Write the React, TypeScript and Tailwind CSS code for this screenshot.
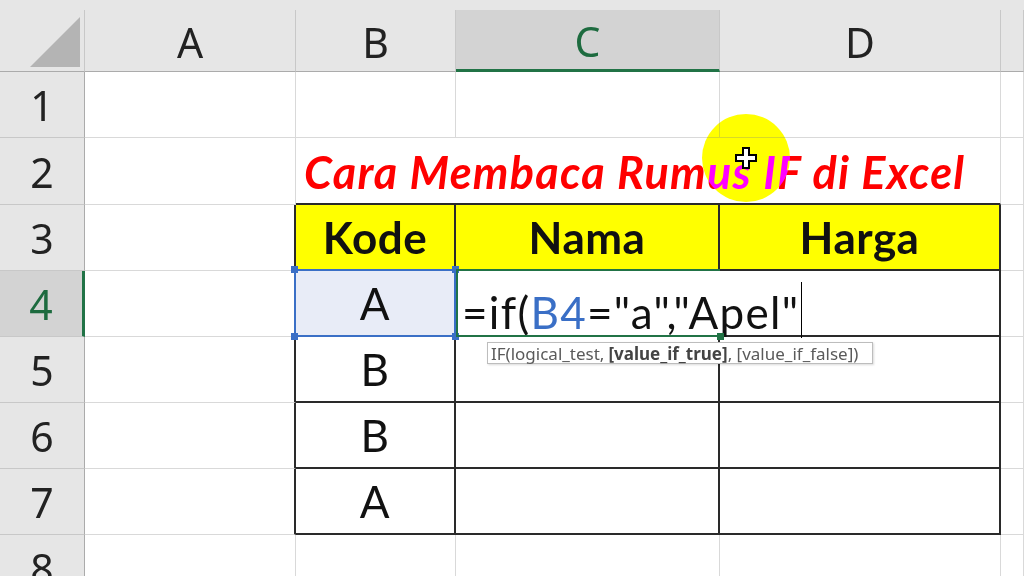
import React from "react";
import clsx from "clsx";

type B = "g" | "k" | "n";

const colHeaders = ["A", "B", "C", "D", ""];

function borderCls(r: B, b: B) {
  return clsx(
    r === "g" && "border-r border-r-[#d9d9d9]",
    r === "k" && "border-r-2 border-r-[#2a2a2a]",
    b === "g" && "border-b border-b-[#d9d9d9]",
    b === "k" && "border-b-2 border-b-[#2a2a2a]"
  );
}

// borders [row][col] for rows 1..8, cols A..E
const borders: [B, B][][] = [
  [["g", "g"], ["g", "g"], ["g", "g"], ["g", "g"], ["g", "g"]],
  [["g", "g"], ["n", "k"], ["n", "k"], ["g", "k"], ["g", "g"]],
  [["k", "g"], ["k", "k"], ["k", "k"], ["k", "k"], ["g", "g"]],
  [["k", "g"], ["k", "k"], ["n", "k"], ["k", "k"], ["g", "g"]],
  [["k", "g"], ["k", "k"], ["k", "k"], ["k", "k"], ["g", "g"]],
  [["k", "g"], ["k", "k"], ["k", "k"], ["k", "k"], ["g", "g"]],
  [["k", "g"], ["k", "k"], ["k", "k"], ["k", "k"], ["g", "g"]],
  [["g", "g"], ["g", "g"], ["g", "g"], ["g", "g"], ["g", "g"]],
];

const cellFont = "font-['Lato',sans-serif] text-[44px] leading-none tracking-[0.5px] text-[#111]";

function CellContent({ r, c }: { r: number; c: number }) {
  if (r === 2 && c === 1) {
    return (
      <span className="relative z-10 whitespace-nowrap pl-[8px] pt-[4px] font-['Lato',sans-serif] text-[45px] font-bold italic leading-none tracking-[1.25px] text-[#ff0000]">
        Cara Membaca Rumus IF di Excel
      </span>
    );
  }
  if (r === 3 && c >= 1 && c <= 3) {
    const t = ["Kode", "Nama", "Harga"][c - 1];
    return <span className={clsx(cellFont, "font-bold")}>{t}</span>;
  }
  if (c === 1 && r >= 4 && r <= 7) {
    const t = ["A", "B", "B", "A"][r - 4];
    return <span className={cellFont}>{t}</span>;
  }
  if (r === 4 && c === 2) {
    return (
      <span className={clsx(cellFont, "relative z-10 whitespace-nowrap pl-[6px] tracking-[1.3px]")}>
        =if(<span className="text-[#3a6fc6]">B4</span>="a","Apel"
        <span className="ml-[2px] inline-block h-[56px] w-px translate-y-[9px] bg-black align-baseline" />
      </span>
    );
  }
  return null;
}

function Cursor() {
  return (
    <svg width="24" height="24" viewBox="0 0 24 24" className="absolute left-[734px] top-[146px] z-30">
      <path
        d="M9 2 H15 V9 H22 V15 H15 V22 H9 V15 H2 V9 H9 Z"
        fill="#ffffff"
        stroke="#000000"
        strokeWidth="2"
        strokeLinejoin="miter"
      />
    </svg>
  );
}

export default function App() {
  return (
    <div className="relative h-[576px] w-[1024px] overflow-hidden bg-white">
      <div className="h-[10px] bg-[#e6e6e6]" />
      <div className="grid grid-cols-[85px_211px_160px_264px_281px_23px] grid-rows-[62px_66px_67px_66px_66px_66px_66px_66px_66px]">
        {/* header row */}
        <div className="relative border-b border-r border-b-[#ababab] border-r-[#c8c8c8] bg-[#e6e6e6]">
          <svg width="85" height="62" className="absolute left-0 top-0">
            <polygon points="30,57 80,57 80,7" fill="#b4b4b4" />
          </svg>
        </div>
        {colHeaders.map((h, i) => (
          <div
            key={i}
            className={clsx(
              "flex items-center justify-center font-['Noto_Sans',sans-serif] text-[41px] leading-none",
              i === 2
                ? "border-b-[3px] border-r border-b-[#217346] border-r-[#c8c8c8] bg-[#d3d3d3] text-[#1d6b3f]"
                : "border-b border-r border-b-[#ababab] border-r-[#c8c8c8] bg-[#e6e6e6] text-[#222]"
            )}
          >
            <span className="mt-[4px]">{h}</span>
          </div>
        ))}
        {borders.map((row, ri) => {
          const r = ri + 1;
          return (
            <React.Fragment key={r}>
              <div
                className={clsx(
                  "flex items-center justify-center font-['Noto_Sans',sans-serif] text-[41px] leading-none",
                  r === 4
                    ? "border-b border-r-[3px] border-b-[#c8c8c8] border-r-[#217346] bg-[#d3d3d3] text-[#1d6b3f]"
                    : "border-b border-r border-b-[#c8c8c8] border-r-[#ababab] bg-[#e6e6e6] text-[#222]"
                )}
              >
                <span className="mt-[2px]">{r}</span>
              </div>
              {row.map(([br, bb], ci) => (
                <div
                  key={ci}
                  className={clsx(
                    "relative flex items-center",
                    borderCls(br, bb),
                    r === 3 && ci >= 1 && ci <= 3 && "bg-[#ffff00]",
                    r === 4 && ci === 1 && "bg-[#e8ecf7]",
                    (r === 2 || (r === 4 && ci === 2)) ? "justify-start" : "justify-center"
                  )}
                >
                  <CellContent r={r} c={ci} />
                  {r === 4 && ci === 1 && (
                    <div className="absolute -left-[2px] -top-[2px] z-20 h-[68px] w-[162px] border-2 border-[#3a6fc6]">
                      <div className="absolute -left-[5px] -top-[5px] h-[7px] w-[7px] bg-[#3a6fc6]" />
                      <div className="absolute -right-[5px] -top-[5px] h-[7px] w-[7px] bg-[#3a6fc6]" />
                      <div className="absolute -bottom-[5px] -left-[5px] h-[7px] w-[7px] bg-[#3a6fc6]" />
                      <div className="absolute -bottom-[5px] -right-[5px] h-[7px] w-[7px] bg-[#3a6fc6]" />
                    </div>
                  )}
                  {r === 4 && ci === 2 && (
                    <div className="absolute left-0 -top-[2px] z-20 h-[68px] w-[264px] border-b-2 border-l-2 border-t-2 border-[#217346]">
                      <div className="absolute -bottom-[5px] -right-[4px] h-[7px] w-[7px] bg-[#217346]" />
                    </div>
                  )}
                </div>
              ))}
            </React.Fragment>
          );
        })}
      </div>

      {/* highlight circle (difference blend: white -> yellow, red -> magenta) */}
      <div className="absolute left-[702px] top-[114px] z-20 h-[88px] w-[88px] rounded-full bg-[#0000ff] mix-blend-difference" />
      <Cursor />

      {/* function tooltip */}
      <div className="absolute left-[487px] top-[342px] z-30 flex h-[22px] w-[386px] items-center whitespace-nowrap border border-[#bdbdbd] bg-white pl-[3px] font-['Noto_Sans',sans-serif] text-[17px] leading-none text-[#5a5a5a] shadow-[1px_1px_2px_rgba(0,0,0,0.15)]">
        IF(logical_test, <span className="ml-[4px] font-bold text-[#444]">[value_if_true]</span>, [value_if_false])
      </div>
    </div>
  );
}
